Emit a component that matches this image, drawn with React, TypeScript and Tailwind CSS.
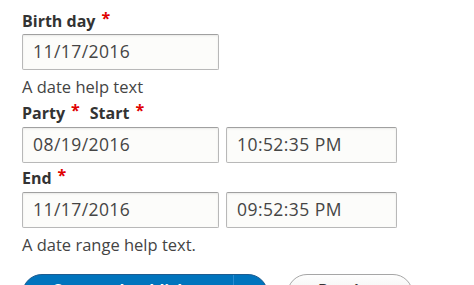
import React from "react";

const font = { fontFamily: '"Open Sans", "DejaVu Sans", sans-serif' };

function Star() {
  return <span className="text-[#e00000] ml-[6px] relative top-[-3px]">*</span>;
}

function Input({ value, w }: { value: string; w: string }) {
  return (
    <div
      className={`${w} h-[36px] flex items-center pl-[10px] border border-[#b8b8b8] border-t-[#a0a0a0] rounded-[2px] bg-[#fcfcfa] text-[17.5px] tracking-[0.025em] text-[#454545] leading-none shadow-[inset_0_1px_2px_rgba(0,0,0,0.08)]`}
    >
      {value}
    </div>
  );
}

export default function App() {
  return (
    <div className="w-[474px] h-[285px] overflow-hidden bg-white pl-[22px] pt-[10px]" style={font}>
      <div className="text-[16px] leading-[22px] font-bold text-[#333]">
        Birth day<Star />
      </div>
      <div className="mt-[2px]">
        <Input value="11/17/2016" w="w-[197px]" />
      </div>
      <div className="mt-[6px] text-[16.5px] leading-[22px] text-[#444]">A date help text</div>
      <div className="mt-[4px] text-[16px] leading-[22px] font-bold text-[#333] flex">
        <span>
          Party<Star />
        </span>
        <span className="ml-[10px]">
          Start<Star />
        </span>
      </div>
      <div className="mt-[3px] flex gap-[7px]">
        <Input value="08/19/2016" w="w-[197px]" />
        <Input value="10:52:35 PM" w="w-[171px]" />
      </div>
      <div className="mt-[4px] text-[16px] leading-[22px] font-bold text-[#333]">
        End<Star />
      </div>
      <div className="mt-[3px] flex gap-[7px]">
        <Input value="11/17/2016" w="w-[197px]" />
        <Input value="09:52:35 PM" w="w-[171px]" />
      </div>
      <div className="mt-[6px] text-[16.5px] leading-[22px] text-[#444]">A date range help text.</div>
      <div className="mt-[18px] flex items-start">
        <div className="flex w-[246px] h-[40px] rounded-[20px] bg-[#0074bd] border border-[#1e5c90] overflow-hidden text-white font-bold text-[16px] leading-[22px]">
          <div className="flex-1 pt-[4px] pl-[30px]">Save and publish</div>
          <div className="w-[34px] border-l border-[#2a8bd0]"></div>
        </div>
        <div className="ml-[19px] w-[126px] h-[40px] rounded-[20px] border border-[#a6a6a6] bg-gradient-to-b from-[#fefefe] to-[#e8e8e4] text-[#333] font-bold text-[16px] leading-[22px] pt-[4px] text-center">
          Preview
        </div>
      </div>
    </div>
  );
}
